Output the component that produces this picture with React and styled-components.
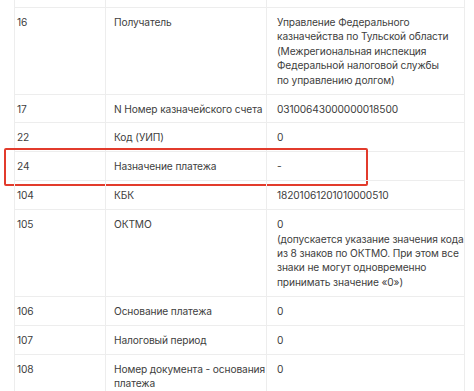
import React from "react";
import styled, { createGlobalStyle } from "styled-components";

const Global = createGlobalStyle`
  html, body { margin: 0; padding: 0; background: #ffffff; }
  body { font-family: Inter, "Noto Sans", sans-serif; }
`;

const Page = styled.div`
  width: 474px;
  height: 391px;
  overflow: hidden;
  background: #fff;
  padding-left: 14px;
  box-sizing: border-box;
`;

const Table = styled.div`
  display: grid;
  grid-template-columns: 91px 161px 199px;
  width: 451px;
`;

const Row = styled.div`
  display: contents;
`;

const Cell = styled.div`
  position: relative;
  box-sizing: border-box;
  min-width: 0;
  min-height: ${(p) => (p.$spacer ? "8px" : "28px")};
  height: ${(p) => (p.$spacer ? "8px" : "auto")};
  padding: ${(p) => (p.$spacer ? "0" : p.$pad)};
  border-left: 1px solid #ededed;
  border-right: ${(p) => (p.$last ? "1px solid #ededed" : "none")};
  border-bottom: 1px solid #ededed;
  font-size: 10.2px;
  letter-spacing: -0.12px;
  line-height: 14.4px;
  color: #404040;
  white-space: pre;
`;

const Highlight = styled.div`
  position: absolute;
  left: -11px;
  top: -4px;
  width: 364px;
  height: 38px;
  box-sizing: border-box;
  border: 2.5px solid #e23b2c;
  border-radius: 2px;
  pointer-events: none;
`;

const rows = [
  ["16", "Получатель", "Управление Федерального\nказначейства по Тульской области\n(Межрегиональная инспекция\nФедеральной налоговой службы\nпо управлению долгом)"],
  ["17", "N Номер казначейского счета", "03100643000000018500"],
  ["22", "Код (УИП)", "0"],
  ["24", "Назначение платежа", "-", true],
  ["104", "КБК", "18201061201010000510"],
  ["105", "ОКТМО", "0\n(допускается указание значения кода\nиз 8 знаков по ОКТМО. При этом все\nзнаки не могут одновременно\nпринимать значение «0»)"],
  ["106", "Основание платежа", "0"],
  ["107", "Налоговый период", "0"],
  ["108", "Номер документа - основания\nплатежа", "0"],
];

export default function App() {
  return (
    <>
      <Global />
      <Page>
        <Table>
          <Row>
            <Cell $spacer />
            <Cell $spacer />
            <Cell $spacer $last />
          </Row>
          {rows.map(([num, name, value, marked]) => (
            <Row key={num}>
              <Cell $pad="7px 4px 6.5px 2px">
                {num}
                {marked && <Highlight />}
              </Cell>
              <Cell $pad="7px 2px 6.5px 8px">{name}</Cell>
              <Cell $pad="7px 1px 6.5px 10px" $last>{value}</Cell>
            </Row>
          ))}
        </Table>
      </Page>
    </>
  );
}
